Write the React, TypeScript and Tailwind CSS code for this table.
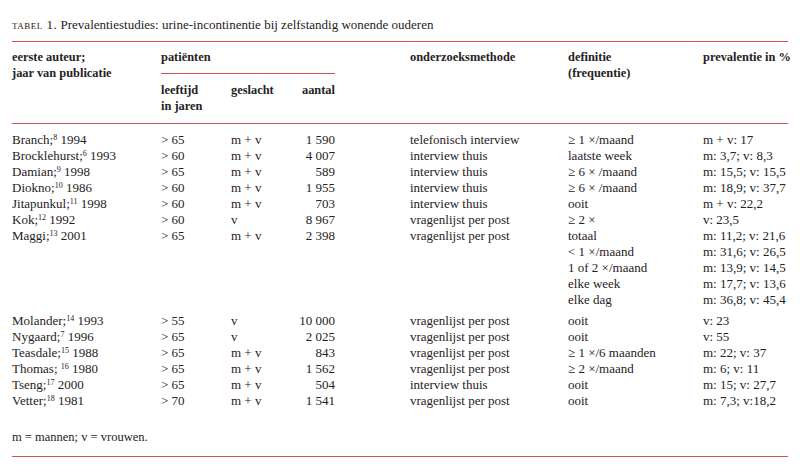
import React from 'react';

type Row = {
  author?: string;
  note?: string;
  spaced?: boolean;
  year?: string;
  age?: string;
  sex?: string;
  count?: string;
  method?: string;
  def: string;
  prev: string;
};

const FIRST: Row[] = [
  { author: 'Branch;', note: '8', year: '1994', age: '> 65', sex: 'm + v', count: '1 590', method: 'telefonisch interview', def: '≥ 1 ×/maand', prev: 'm + v: 17' },
  { author: 'Brocklehurst;', note: '6', year: '1993', age: '> 60', sex: 'm + v', count: '4 007', method: 'interview thuis', def: 'laatste week', prev: 'm: 3,7; v: 8,3' },
  { author: 'Damian;', note: '9', year: '1998', age: '> 65', sex: 'm + v', count: '589', method: 'interview thuis', def: '≥ 6 × /maand', prev: 'm: 15,5; v: 15,5' },
  { author: 'Diokno;', note: '10', year: '1986', age: '> 60', sex: 'm + v', count: '1 955', method: 'interview thuis', def: '≥ 6 × /maand', prev: 'm: 18,9; v: 37,7' },
  { author: 'Jitapunkul;', note: '11', year: '1998', age: '> 60', sex: 'm + v', count: '703', method: 'interview thuis', def: 'ooit', prev: 'm + v: 22,2' },
  { author: 'Kok;', note: '12', year: '1992', age: '> 60', sex: 'v', count: '8 967', method: 'vragenlijst per post', def: '≥ 2 ×', prev: 'v: 23,5' },
  { author: 'Maggi;', note: '13', year: '2001', age: '> 65', sex: 'm + v', count: '2 398', method: 'vragenlijst per post', def: 'totaal', prev: 'm: 11,2; v: 21,6' },
  { def: '< 1 ×/maand', prev: 'm: 31,6; v: 26,5' },
  { def: '1 of 2 ×/maand', prev: 'm: 13,9; v: 14,5' },
  { def: 'elke week', prev: 'm: 17,7; v: 13,6' },
  { def: 'elke dag', prev: 'm: 36,8; v: 45,4' },
];

const SECOND: Row[] = [
  { author: 'Molander;', note: '14', year: '1993', age: '> 55', sex: 'v', count: '10 000', method: 'vragenlijst per post', def: 'ooit', prev: 'v: 23' },
  { author: 'Nygaard;', note: '7', year: '1996', age: '> 65', sex: 'v', count: '2 025', method: 'vragenlijst per post', def: 'ooit', prev: 'v: 55' },
  { author: 'Teasdale;', note: '15', year: '1988', age: '> 65', sex: 'm + v', count: '843', method: 'vragenlijst per post', def: '≥ 1 ×/6 maanden', prev: 'm: 22; v: 37' },
  { author: 'Thomas;', note: '16', spaced: true, year: '1980', age: '> 65', sex: 'm + v', count: '1 562', method: 'vragenlijst per post', def: '≥ 2 ×/maand', prev: 'm: 6; v: 11' },
  { author: 'Tseng;', note: '17', year: '2000', age: '> 65', sex: 'm + v', count: '504', method: 'interview thuis', def: 'ooit', prev: 'm: 15; v: 27,7' },
  { author: 'Vetter;', note: '18', year: '1981', age: '> 70', sex: 'm + v', count: '1 541', method: 'vragenlijst per post', def: 'ooit', prev: 'm: 7,3; v:18,2' },
];

const COLS = 'grid grid-cols-[149px_70px_60px_44px_75px_158px_135px_1fr]';

const Rule = () => <div className="h-px bg-[#c9545b]" />;

const TableRow: React.FC<{ row: Row }> = ({ row }) => (
  <div className={`${COLS} h-4 leading-4 whitespace-nowrap`}>
    <div>
      {row.author}
      {row.note && (
        <>
          {row.spaced && ' '}
          <sup className="text-[8px]">{row.note}</sup> {row.year}
        </>
      )}
    </div>
    <div>{row.age}</div>
    <div>{row.sex}</div>
    <div className="text-right">{row.count}</div>
    <div />
    <div>{row.method}</div>
    <div>{row.def}</div>
    <div>{row.prev}</div>
  </div>
);

export default function App() {
  return (
    <div className="w-[800px] h-[472px] bg-white px-3 font-['Liberation_Serif',serif] text-[#262223] text-[13px]">
      {/* Caption */}
      <div className="h-[41px] pt-[17px] text-[13px] leading-4 whitespace-nowrap">
        <span className="[font-variant:small-caps] tracking-[0.5px]">tabel 1.</span> Prevalentiestudies: urine-incontinentie bij zelfstandig wonende ouderen
      </div>
      <Rule />

      {/* Header */}
      <div className={`${COLS} pt-[7px] pb-[9px] font-bold text-[12.4px] leading-4`}>
        <div>
          eerste auteur;
          <br />
          jaar van publicatie
        </div>
        <div className="col-span-3">
          <div>patiënten</div>
          <div className="mt-2 h-px bg-[#c9545b]" />
          <div className="grid grid-cols-[70px_60px_44px] pt-2">
            <div>
              leeftijd
              <br />
              in jaren
            </div>
            <div>geslacht</div>
            <div className="text-right">aantal</div>
          </div>
        </div>
        <div />
        <div>onderzoeksmethode</div>
        <div>
          definitie
          <br />
          (frequentie)
        </div>
        <div className="whitespace-nowrap">prevalentie in %</div>
      </div>
      <Rule />

      {/* Body */}
      <div className="pt-2">
        {FIRST.map((r, i) => (
          <TableRow key={i} row={r} />
        ))}
      </div>
      <div className="pt-[5px]">
        {SECOND.map((r, i) => (
          <TableRow key={i} row={r} />
        ))}
      </div>

      {/* Footnote */}
      <div className="mt-5 leading-4 text-[12.5px]">m = mannen; v = vrouwen.</div>
      <div className="mt-[11px]">
        <Rule />
      </div>
    </div>
  );
}
